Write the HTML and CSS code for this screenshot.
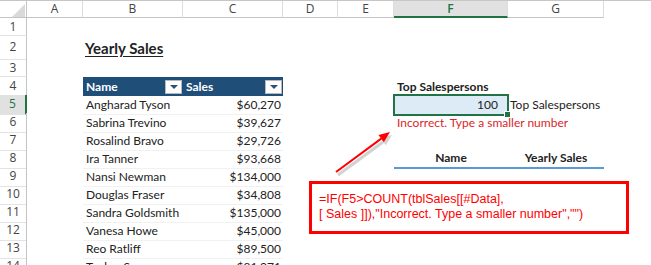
FILE: index.html
```html
<!DOCTYPE html>
<html lang="en">
<head>
  <meta charset="UTF-8">
  <title>Yearly Sales</title>
  <link rel="stylesheet" href="styles.css">
</head>
<body>
  <div class="sheet">
    <div class="row head">
      <div class="corner"></div>
      <div class="colhead">A</div>
      <div class="colhead">B</div>
      <div class="colhead">C</div>
      <div class="colhead">D</div>
      <div class="colhead">E</div>
      <div class="colhead active">F</div>
      <div class="colhead">G</div>
    </div>

    <div class="row"><div class="rh">1</div></div>
    <div class="row tall">
      <div class="rh">2</div>
      <div class="cell col-b title">Yearly Sales</div>
    </div>
    <div class="row"><div class="rh">3</div></div>
    <div class="row">
      <div class="rh">4</div>
      <div class="cell col-b tbl-head">Name<span class="filter"></span></div>
      <div class="cell col-c tbl-head">Sales<span class="filter"></span></div>
      <div class="cell col-f bold">Top Salespersons</div>
    </div>
    <div class="row">
      <div class="rh active">5</div>
      <div class="cell col-b tbl">Angharad Tyson</div>
      <div class="cell col-c tbl num">$60,270</div>
      <div class="cell col-f input">100</div>
      <div class="cell col-g label">Top Salespersons</div>
    </div>
    <div class="row">
      <div class="rh">6</div>
      <div class="cell col-b tbl">Sabrina Trevino</div>
      <div class="cell col-c tbl num">$39,627</div>
      <div class="cell col-f warn">Incorrect. Type a smaller number</div>
    </div>
    <div class="row">
      <div class="rh">7</div>
      <div class="cell col-b tbl">Rosalind Bravo</div>
      <div class="cell col-c tbl num">$29,726</div>
    </div>
    <div class="row">
      <div class="rh">8</div>
      <div class="cell col-b tbl">Ira Tanner</div>
      <div class="cell col-c tbl num">$93,668</div>
      <div class="cell col-f sub-head">Name</div>
      <div class="cell col-g sub-head">Yearly Sales</div>
    </div>
    <div class="row">
      <div class="rh">9</div>
      <div class="cell col-b tbl">Nansi Newman</div>
      <div class="cell col-c tbl num">$134,000</div>
    </div>
    <div class="row">
      <div class="rh">10</div>
      <div class="cell col-b tbl">Douglas Fraser</div>
      <div class="cell col-c tbl num">$34,808</div>
    </div>
    <div class="row">
      <div class="rh">11</div>
      <div class="cell col-b tbl">Sandra Goldsmith</div>
      <div class="cell col-c tbl num">$135,000</div>
    </div>
    <div class="row">
      <div class="rh">12</div>
      <div class="cell col-b tbl">Vanesa Howe</div>
      <div class="cell col-c tbl num">$45,000</div>
    </div>
    <div class="row">
      <div class="rh">13</div>
      <div class="cell col-b tbl">Reo Ratliff</div>
      <div class="cell col-c tbl num">$89,500</div>
    </div>
    <div class="row">
      <div class="rh">14</div>
      <div class="cell col-b tbl">Tucker Spears</div>
      <div class="cell col-c tbl num">$81,071</div>
    </div>

    <!-- callout pointing at F6 -->
    <svg class="arrow" width="70" height="52" viewBox="0 0 70 52">
      <line x1="8" y1="47" x2="53" y2="14" stroke="#b5b5b5" stroke-width="3" opacity="0.6"/>
      <polygon points="62,7 55.8,17.2 50.5,9.9" fill="#b5b5b5" opacity="0.6"/>
      <line x1="6" y1="44" x2="51.2" y2="10.6" stroke="#ff0000" stroke-width="2"/>
      <polygon points="60,4 53.8,14.2 48.5,6.9" fill="#ff0000"/>
    </svg>
    <div class="formula">
      =IF(F5&gt;COUNT(tblSales[[#Data],<br>
      [ Sales ]]),"Incorrect. Type a smaller number","")
    </div>
  </div>
</body>
</html>
```

FILE: styles.css
```css
body {
  margin: 0;
  background-color: #fff;
  font-family: Lato, 'Liberation Sans', sans-serif;
  font-size: 12px;
  color: #222;
}

.sheet {
  position: relative;
  width: 651px;
  height: 265px;
  overflow: hidden;
}

.row {
  display: grid;
  grid-template-columns: 27px 56px 100px 100px 55px 56px 114px 96px 47px;
  height: 18px;
}

.row.tall {
  height: 23px;
}

/* column headers */
.row.head {
  border-top: 1px solid #c6c6c6;
  box-sizing: border-box;
}

.corner {
  border-right: 1px solid #c4c4c4;
  border-bottom: 1px solid #c4c4c4;
}

.corner::after {
  content: "";
  display: block;
  width: 13px;
  height: 13px;
  margin: 3px 0 0 12px;
  background-color: #d9d9d9;
  clip-path: polygon(100% 0, 100% 100%, 0 100%);
}

.colhead {
  border-right: 1px solid #dcdcdc;
  border-bottom: 1px solid #c4c4c4;
  text-align: center;
  font-family: 'Open Sans', sans-serif;
  font-size: 12px;
  line-height: 16px;
  color: #444;
}

.colhead.active {
  background-color: #e1e1e1;
  color: #217346;
  font-weight: 600;
  border-bottom: 2px solid #217346;
  line-height: 15px;
}

/* row headers */
.rh {
  box-sizing: border-box;
  border-right: 1px solid #c4c4c4;
  border-bottom: 1px solid #e3e3e3;
  text-align: center;
  font-family: 'Open Sans', sans-serif;
  font-size: 12px;
  line-height: 17px;
  color: #444;
}

.row.tall .rh {
  line-height: 22px;
}

.rh.active {
  background-color: #e1e1e1;
  color: #217346;
  border-right: 2px solid #217346;
}

/* cells */
.cell {
  min-width: 0;
  padding: 0 3px;
  white-space: nowrap;
  line-height: 19px;
}

.col-b { grid-column: 3; }
.col-c { grid-column: 4; }
.col-f { grid-column: 7; }
.col-g { grid-column: 8; }

.bold {
  font-weight: bold;
}

.title {
  padding-left: 2px;
  font-size: 15px;
  font-weight: bold;
  line-height: 24px;
  text-decoration: underline;
  text-underline-offset: 2px;
}

.tbl-head {
  display: flex;
  align-items: center;
  justify-content: space-between;
  padding: 0 1px 0 3px;
  background-color: #1f4e79;
  color: #fff;
  font-weight: bold;
}

.filter {
  display: flex;
  align-items: center;
  justify-content: center;
  width: 15px;
  height: 12px;
  background-color: #fff;
  border: 1px solid #b8b8b8;
}

.filter::before {
  content: "";
  border-left: 4px solid transparent;
  border-right: 4px solid transparent;
  border-top: 4px solid #2e5078;
}

.tbl {
  border-bottom: 1px solid #f1f1f1;
}

.num {
  text-align: right;
  padding-right: 2px;
}

.input {
  position: relative;
  background-color: #ddebf7;
  text-align: right;
  padding-right: 10px;
  outline: 2px solid #217346;
  outline-offset: -1px;
}

.input::after {
  content: "";
  position: absolute;
  right: -3px;
  bottom: -3px;
  width: 5px;
  height: 5px;
  background-color: #217346;
  border: 1px solid #fff;
}

.label {
  padding-left: 2px;
}

.warn {
  color: #d9262b;
}

.sub-head {
  box-sizing: border-box;
  text-align: center;
  font-weight: bold;
  border-bottom: 2px solid #5b9bd5;
  line-height: 17px;
}

/* annotation */
.arrow {
  position: absolute;
  left: 330px;
  top: 128px;
}

.formula {
  position: absolute;
  left: 309px;
  top: 181px;
  width: 320px;
  height: 53px;
  box-sizing: border-box;
  padding: 8px 7px;
  border: 3px solid #ff0000;
  background-color: #fff;
  font-family: 'Liberation Sans', Arial, sans-serif;
  font-size: 12.5px;
  line-height: 15px;
  color: #ff0000;
}
```
